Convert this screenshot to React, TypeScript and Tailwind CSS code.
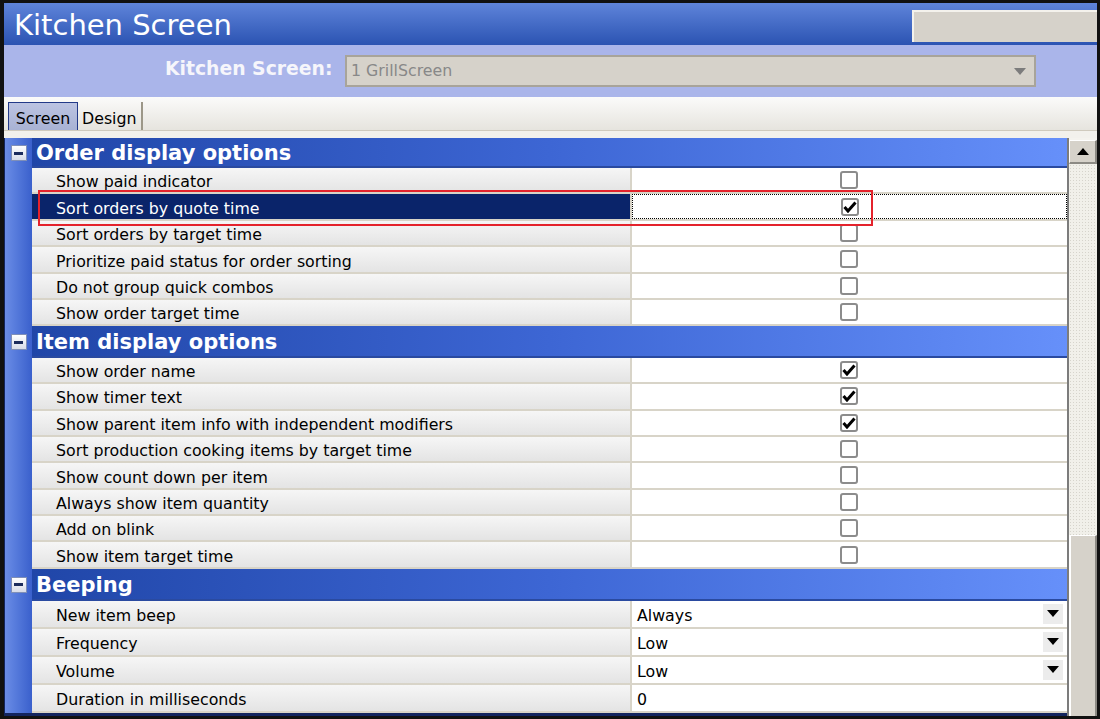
import React from 'react';

type Row = {
  label: string;
  checked?: boolean;
  selected?: boolean;
  value?: string;
  dropdown?: boolean;
};

const orderRows: Row[] = [
  { label: 'Show paid indicator' },
  { label: 'Sort orders by quote time', checked: true, selected: true },
  { label: 'Sort orders by target time' },
  { label: 'Prioritize paid status for order sorting' },
  { label: 'Do not group quick combos' },
  { label: 'Show order target time' },
];

const itemRows: Row[] = [
  { label: 'Show order name', checked: true },
  { label: 'Show timer text', checked: true },
  { label: 'Show parent item info with independent modifiers', checked: true },
  { label: 'Sort production cooking items by target time' },
  { label: 'Show count down per item' },
  { label: 'Always show item quantity' },
  { label: 'Add on blink' },
  { label: 'Show item target time' },
];

const beepRows: Row[] = [
  { label: 'New item beep', value: 'Always', dropdown: true },
  { label: 'Frequency', value: 'Low', dropdown: true },
  { label: 'Volume', value: 'Low', dropdown: true },
  { label: 'Duration in milliseconds', value: '0' },
];

const font = "font-['DejaVu_Sans','Liberation_Sans',sans-serif]";

const CheckBox = ({ checked }: { checked?: boolean }) => (
  <div className="flex h-[18px] w-[18px] items-center justify-center rounded-[3px] border-2 border-[#8c8c8c] bg-white">
    {checked && (
      <svg width="14" height="12" viewBox="0 0 14 12">
        <path d="M1.5 6 L5 10 L12.5 1.5" fill="none" stroke="#000" strokeWidth="3" />
      </svg>
    )}
  </div>
);

const DropArrow = () => (
  <div className="flex h-[20px] w-[20px] items-center justify-center bg-[#ececec]">
    <svg width="12" height="7" viewBox="0 0 12 7">
      <path d="M0 0 H12 L6 7 Z" fill="#000" />
    </svg>
  </div>
);

const SectionHeader = ({ title, h }: { title: string; h: string }) => (
  <div className={`flex ${h}`}>
    <div className="flex w-[27px] items-center justify-center bg-gradient-to-r from-[#6a8ce6] to-[#3a60cc]">
      <div className="flex h-[16px] w-[16px] items-center justify-center border border-[#7f8fb8] bg-gradient-to-b from-white to-[#d8dce8]">
        <div className="h-[3px] w-[9px] bg-[#1c2c5c]" />
      </div>
    </div>
    <div className="flex flex-1 items-center border-b-2 border-[#2a4aa0] bg-gradient-to-r from-[#2046a8] via-[#3d66d4] to-[#6690fa] pl-[4px] pt-[4px] text-[21px] font-bold text-white">
      {title}
    </div>
  </div>
);

const GridRow = ({ row, h }: { row: Row; h: string }) => (
  <div className={`flex ${h}`}>
    <div className="w-[27px] bg-gradient-to-r from-[#6a8ce6] to-[#3a60cc]" />
    <div
      className={`flex w-[600px] items-center border-b-2 border-r-2 border-[#d8d4c8] pl-[24px] pt-[4px] text-[15.8px] ${
        row.selected
          ? 'bg-[#0a246a] text-white'
          : 'bg-gradient-to-b from-[#f6f6f6] to-[#e4e4e4] text-black'
      }`}
    >
      {row.label}
    </div>
    <div className="flex flex-1 border-b-2 border-[#d8d4c8] bg-white">
      {row.value !== undefined ? (
        <div className="flex flex-1 items-center justify-between pl-[5px] pr-[4px] text-[15.8px] text-black">
          <span className="pt-[4px]">{row.value}</span>
          {row.dropdown && <DropArrow />}
        </div>
      ) : (
        <div
          className={`flex flex-1 items-center pl-[208px] ${
            row.selected ? 'border border-dotted border-black' : ''
          }`}
        >
          <CheckBox checked={row.checked} />
        </div>
      )}
    </div>
  </div>
);

export default function App() {
  return (
    <div
      className={`relative flex h-[719px] w-[1100px] flex-col overflow-hidden border-b-[3px] border-l-[4px] border-r-[3px] border-t-[3px] border-[#111111] bg-[#efede6] ${font}`}
    >
      {/* title bar */}
      <div className="flex h-[42px] items-start justify-between bg-gradient-to-b from-[#5f84da] to-[#2b53b2]">
        <div className="pl-[10px] pt-[4px] text-[29px] leading-[36px] text-white">Kitchen Screen</div>
        <div className="mt-[7px] h-[32px] w-[185px] border-l-2 border-t-2 border-[#f4f2ec] bg-[#d6d2ca]" />
      </div>

      {/* selector band */}
      <div className="flex h-[52px] items-center bg-[#aab5ea] pl-[161px]">
        <span className="mb-[3px] w-[180px] text-[18.8px] font-bold text-[#f6f6fb]">Kitchen Screen:</span>
        <div className="flex h-[32px] w-[691px] items-center justify-between border-2 border-[#a8a49a] bg-[#d6d2ca] pl-[4px] pr-[8px] text-[15.8px] text-[#888888]">
          <span>1 GrillScreen</span>
          <svg width="12" height="7" viewBox="0 0 12 7">
            <path d="M0 0 H12 L6 7 Z" fill="#7c7c7c" />
          </svg>
        </div>
      </div>

      {/* tabs */}
      <div className="flex h-[34px] items-end border-b border-[#cfcabd] bg-gradient-to-b from-[#fbfbfa] to-[#e6e4de] pl-[4px] text-[15.8px]">
        <div className="flex h-[28px] w-[70px] items-center justify-center border-l border-r border-t border-[#233a88] bg-gradient-to-b from-[#bcc4e2] to-[#a8b2d4] pt-[5px] text-black">
          Screen
        </div>
        <div className="flex h-[28px] items-center border-r-2 border-[#9c9788] px-[4px] pt-[5px] text-black">Design</div>
      </div>

      <div className="h-[7px] bg-[#f2f1ec]" />

      {/* property grid */}
      <div className="flex flex-1 bg-[#12245e] pl-[1px]">
        <div className="flex w-[1062px] flex-col">
          <SectionHeader title="Order display options" h="h-[30px]" />
          {orderRows.map((r) => (
            <GridRow key={r.label} row={r} h="h-[26.4px]" />
          ))}
          <SectionHeader title="Item display options" h="h-[31.4px]" />
          {itemRows.map((r) => (
            <GridRow key={r.label} row={r} h="h-[26.4px]" />
          ))}
          <SectionHeader title="Beeping" h="h-[32px]" />
          {beepRows.map((r) => (
            <GridRow key={r.label} row={r} h="h-[28px]" />
          ))}
        </div>

        {/* scrollbar */}
        <div className="flex w-[30px] flex-col border-l-2 border-[#7c7c7c] bg-[#f4f3ee]">
          <div className="mt-[2px] flex h-[24px] items-center justify-center border-b-2 border-l border-r-2 border-t border-b-[#8c8a84] border-l-white border-r-[#8c8a84] border-t-white bg-[#d6d2ca]">
            <svg width="12" height="7" viewBox="0 0 12 7">
              <path d="M0 7 H12 L6 0 Z" fill="#000" />
            </svg>
          </div>
          <div className="h-[371px] bg-[#f1f0ea] bg-[radial-gradient(#d6d4cc_1px,transparent_1px)] bg-[length:3px_3px]" />
          <div className="flex-1 border-l-2 border-r-2 border-t border-l-white border-r-[#8c8a84] border-t-white bg-[#d6d2ca]" />
        </div>
      </div>

      {/* annotation */}
      <div className="absolute left-[34px] top-[187px] h-[36px] w-[835px] border-2 border-[#e4232c]" />
    </div>
  );
}
